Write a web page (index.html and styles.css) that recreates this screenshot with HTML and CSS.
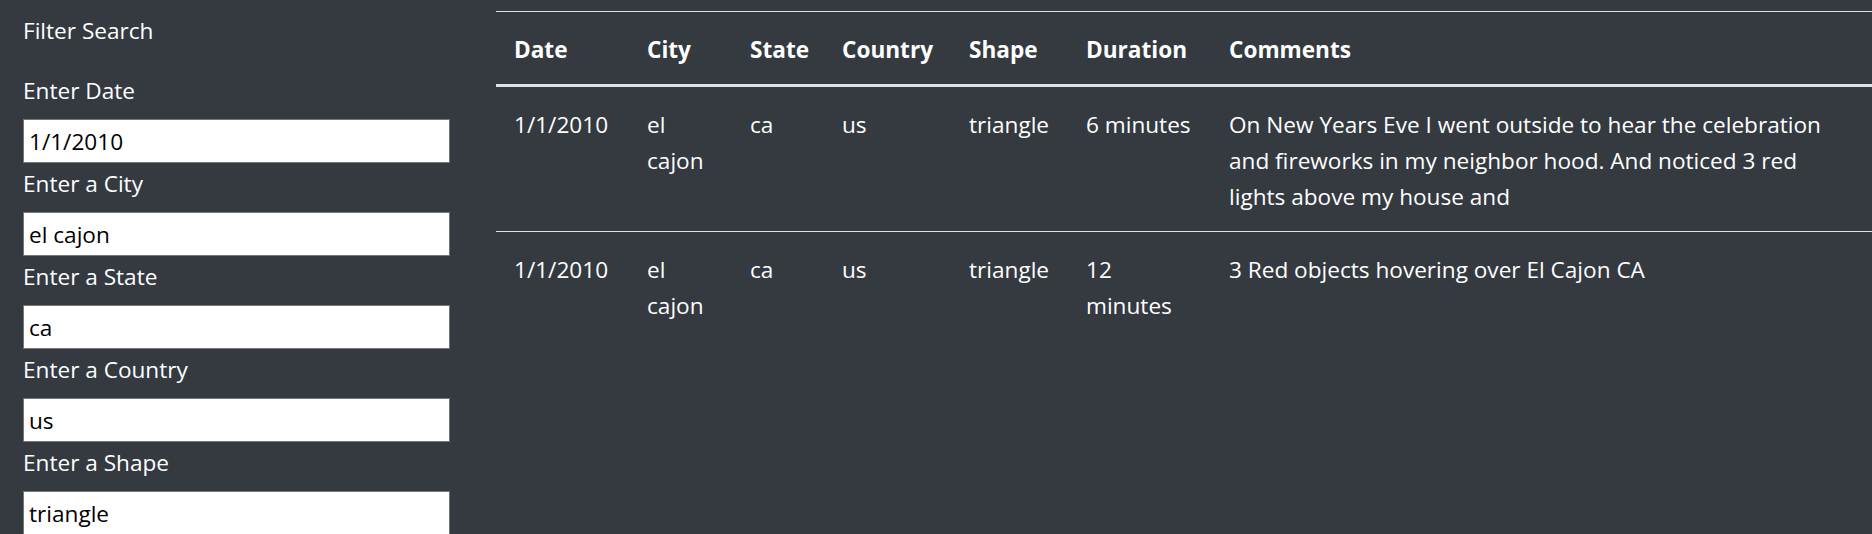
FILE: index.html
```html
<!DOCTYPE html>
<html lang="en">
<head>
<meta charset="utf-8">
<title>UFO Sightings</title>
<link rel="stylesheet" href="styles.css">
</head>
<body>
<div class="page">
  <aside class="sidebar">
    <div class="title">Filter Search</div>
    <form class="filters">
      <div class="field"><label for="datetime">Enter Date</label><input id="datetime" type="text" value="1/1/2010"></div>
      <div class="field"><label for="city">Enter a City</label><input id="city" type="text" value="el cajon"></div>
      <div class="field"><label for="state">Enter a State</label><input id="state" type="text" value="ca"></div>
      <div class="field"><label for="country">Enter a Country</label><input id="country" type="text" value="us"></div>
      <div class="field"><label for="shape">Enter a Shape</label><input id="shape" type="text" value="triangle"></div>
    </form>
  </aside>
  <main class="main">
    <table class="ufo">
      <colgroup>
        <col class="c-date">
        <col class="c-city">
        <col class="c-state">
        <col class="c-country">
        <col class="c-shape">
        <col class="c-duration">
        <col>
      </colgroup>
      <thead>
        <tr>
          <th>Date</th><th>City</th><th>State</th><th>Country</th><th>Shape</th><th>Duration</th><th>Comments</th>
        </tr>
      </thead>
      <tbody>
        <tr>
          <td>1/1/2010</td><td>el cajon</td><td>ca</td><td>us</td><td>triangle</td><td>6 minutes</td>
          <td>On New Years Eve I went outside to hear the celebration and fireworks in my neighbor hood. And noticed 3 red lights above my house and</td>
        </tr>
        <tr>
          <td>1/1/2010</td><td>el cajon</td><td>ca</td><td>us</td><td>triangle</td><td>12 minutes</td>
          <td>3 Red objects hovering over El Cajon CA</td>
        </tr>
      </tbody>
    </table>
  </main>
</div>
</body>
</html>
```

FILE: styles.css
```css
html, body {
  margin: 0;
  padding: 0;
  background: #343a40;
}

body {
  font-family: "Open Sans", "Noto Sans", sans-serif;
  font-size: 22.6px;
  line-height: 36px;
  color: #ffffff;
  overflow: hidden;
}

.page {
  display: flex;
  align-items: flex-start;
}

.sidebar {
  flex: 0 0 496px;
  box-sizing: border-box;
  padding: 13px 0 0 23px;
}

.title {
  line-height: 36px;
  margin-bottom: 24px;
}

.filters {
  margin: 0;
}

.field {
  margin-bottom: 3px;
}

.field label {
  display: block;
  line-height: 36px;
  margin-bottom: 10px;
}

.field input {
  display: block;
  box-sizing: border-box;
  width: 427px;
  height: 44px;
  margin: 0;
  padding: 0 5px;
  border: 1px solid #767676;
  background: #ffffff;
  color: #000000;
  font-family: "Open Sans", "Noto Sans", sans-serif;
  font-size: 22.6px;
  line-height: normal;
  outline: none;
}

.main {
  flex: 1 1 auto;
  min-width: 0;
  padding-top: 11px;
}

.ufo {
  width: 100%;
  table-layout: fixed;
  border-collapse: collapse;
  color: #ffffff;
}

.c-date { width: 133px; }
.c-city { width: 103px; }
.c-state { width: 92px; }
.c-country { width: 127px; }
.c-shape { width: 117px; }
.c-duration { width: 143px; }

.ufo th,
.ufo td {
  padding: 20px 18px 16px;
  text-align: left;
  vertical-align: top;
  line-height: 36px;
  border-top: 1px solid #dee2e6;
}

.ufo th {
  font-weight: 700;
  vertical-align: bottom;
  border-bottom: 3px solid #dee2e6;
}

.ufo tbody tr:last-child td {
  border-bottom: none;
}
```
